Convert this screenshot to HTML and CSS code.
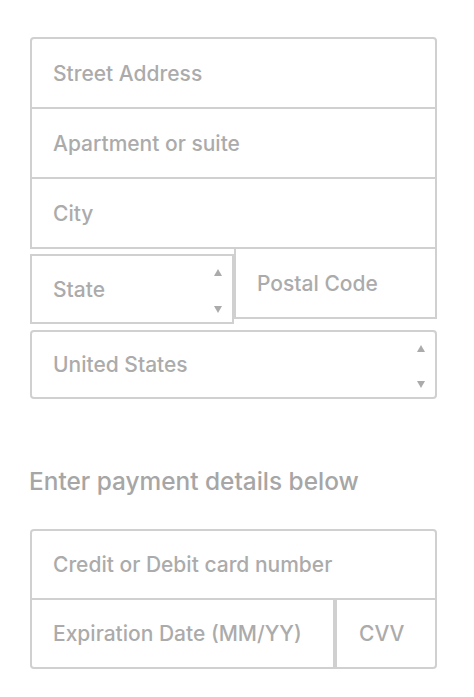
FILE: index.html
```html
<!DOCTYPE html>
<html>
  <head>
    <meta charset="UTF-8" />
    <meta name="viewport" content="width=device-width, initial-scale=1.0" />
    <title>Checkout</title>
    <link rel="stylesheet" href="styles.css">
  </head>
  <body>
    <div class="form">
      <div class="address-group">
        <div class="field field-first">Street Address</div>
        <div class="field">Apartment or suite</div>
        <div class="field">City</div>
        <div class="state-row">
          <div class="field field-state">
            <span class="field-text">State</span>
            <span class="spinner"><i class="arrow-up"></i><i class="arrow-down"></i></span>
          </div>
          <div class="field field-postal">Postal Code</div>
        </div>
        <div class="field field-country">
          <span class="field-text">United States</span>
          <span class="spinner"><i class="arrow-up"></i><i class="arrow-down"></i></span>
        </div>
      </div>

      <h3 class="section-title">Enter payment details below</h3>

      <div class="card-group">
        <div class="field field-card">Credit or Debit card number</div>
        <div class="card-row">
          <div class="field field-exp">Expiration Date (MM/YY)</div>
          <div class="field field-cvv">CVV</div>
        </div>
      </div>
    </div>
  </body>
</html>
```

FILE: styles.css
```css
body {
  margin: 0;
  padding: 37px 0 0 30px;
  background: #fff;
  font-family: Inter, "Liberation Sans", sans-serif;
}
.form {
  width: 407px;
}
.field {
  display: flex;
  align-items: center;
  box-sizing: border-box;
  height: 72px;
  padding: 0 21px;
  border: 2px solid #d0d0d0;
  font-size: 21px;
  font-weight: 500;
  color: #ababab;
}
.address-group > .field + .field,
.address-group > .state-row {
  margin-top: -2px;
}
.field-first {
  border-radius: 4px 4px 0 0;
}
.state-row {
  display: flex;
  align-items: flex-start;
}
.field-state {
  width: 204px;
  height: 70px;
  margin-top: 7px;
  padding-right: 10px;
}
.field-postal {
  flex: 1;
  padding-left: 21px;
}
.field-text {
  flex: 1;
}
.spinner {
  display: flex;
  flex-direction: column;
  justify-content: space-between;
  align-self: stretch;
  padding: 13px 0 9px;
}
.arrow-up,
.arrow-down {
  display: block;
  width: 0;
  height: 0;
  border-left: 4px solid transparent;
  border-right: 4px solid transparent;
}
.arrow-up {
  border-bottom: 7px solid #ababab;
}
.arrow-down {
  border-top: 7px solid #ababab;
}
.address-group > .field-country {
  height: 69px;
  margin-top: 6px;
  padding-right: 10px;
  border-radius: 4px;
}
.section-title {
  margin: 67px 0 33px -1px;
  font-size: 24.4px;
  line-height: 30px;
  font-weight: 500;
  color: #a6a6a6;
}
.field-card {
  height: 71px;
  border-radius: 4px 4px 0 0;
}
.card-row {
  display: flex;
  margin-top: -2px;
}
.field-exp {
  width: 305px;
  height: 71px;
  border-radius: 0 0 0 4px;
}
.field-cvv {
  flex: 1;
  height: 71px;
  padding-left: 22px;
  border-radius: 0 0 4px 0;
}
```
